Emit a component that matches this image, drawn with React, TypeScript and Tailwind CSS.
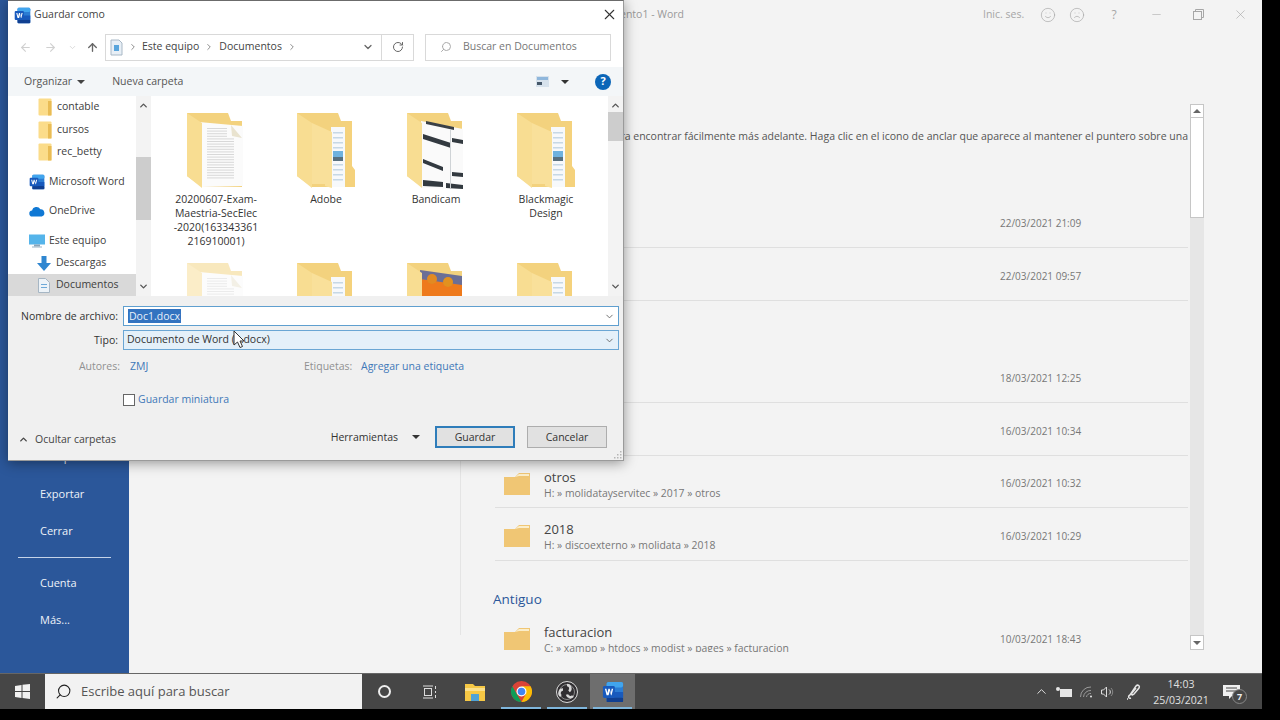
import {
  ArrowLeft,
  ArrowRight,
  ArrowUp,
  ChevronDown,
  ChevronRight,
  ChevronUp,
  Frown,
  Minus,
  RotateCw,
  Search,
  Smile,
  X,
} from "lucide-react";

const font = { fontFamily: '"Open Sans", "Noto Sans", sans-serif' };

const WordIcon = ({ size = 16 }: { size?: number }) => (
  <svg width={size} height={size} viewBox="0 0 24 24" className="shrink-0">
    <rect x="5" y="1" width="18" height="22" rx="2" fill="#2b7cd3" />
    <rect x="5" y="1" width="18" height="6" rx="2" fill="#41a5ee" />
    <rect x="5" y="12" width="18" height="6" fill="#185abd" />
    <rect x="5" y="18" width="18" height="5" rx="1" fill="#103f91" />
    <rect x="1" y="5.5" width="13" height="13" rx="1.5" fill="#185abd" />
    <path d="M3.2 8.5h1.6l1 4.6 1.2-4.6h1.4l1.2 4.6 1-4.6h1.6l-1.8 7H9.8L8.5 11l-1.3 4.5H5z" fill="#fff" />
  </svg>
);

const SmallFolder = () => (
  <svg width="14" height="18" viewBox="0 0 14 18" className="shrink-0">
    <rect x="0.5" y="0.5" width="13" height="17" rx="1" fill="#fbdc8a" />
    <rect x="10" y="3" width="3.5" height="14.5" fill="#e9bc55" />
  </svg>
);

const BigFolder = ({ kind, faded }: { kind: "doc" | "strip" | "band" | "photo"; faded?: boolean }) => (
  <svg width="60" height="78" viewBox="0 0 60 78" className={faded ? "opacity-50" : ""}>
    <path d="M1 1h41l3 8h11v66H16L1 64z" fill="#f3d27e" />
    {kind === "strip" && (
      <>
        <path d="M50 10h6v44l3 4v17H50z" fill="#f5d27c" />
        <rect x="35" y="15" width="14" height="60" fill="#f7f9fb" />
        {[20, 25, 30, 35, 52, 57, 62, 67].map((y) => (
          <rect key={y} x="37" y={y} width="10" height="1.5" fill="#c6d8e6" />
        ))}
        <rect x="37" y="39" width="10" height="6" fill="#6fb2de" />
        <rect x="37" y="45" width="10" height="4" fill="#58707f" />
        <path d="M16 11l20 9v56l-7 -2v-2H16z" fill="#f9e09a" />
      </>
    )}
    {kind === "doc" && (
      <>
        <path d="M13 10l44 4v60l-41 1z" fill="#fbfbfb" />
        <path d="M45 13l11 13l-10 -2z" fill="#e9e3cf" />
        {Array.from({ length: 20 }).map((_, i) => (
          <rect key={i} x="21" y={16 + i * 2.6} width={i < 4 ? 20 : 27} height="1" fill="#d8d8d8" />
        ))}
      </>
    )}
    {kind === "band" && (
      <>
        <path d="M15 9l42 8v60l-41-1z" fill="#fafafa" />
        <path d="M20 9l28 6v3l-28-6z" fill="#3a4046" />
        <path d="M17 22l28 9v5l-28-9zM46 26l11 2v4l-11-2zM17 47l20 8v4l-20-8zM46 60l11 1v4l-11-1zM17 68l20 2v5l-20-1zM40 71l17 2v4l-17-1z" fill="#333a40" />
        <rect x="44" y="18" width="1" height="58" fill="#cfd3d6" />
      </>
    )}
    {kind === "photo" && (
      <>
        <path d="M14 8l42 6v40l-40 2z" fill="#6b6f96" />
        <path d="M14 17l42 6v36H16z" fill="#ee7a1c" />
        <circle cx="26" cy="17" r="5" fill="#e28a22" />
        <circle cx="42" cy="20" r="5" fill="#e2911f" />
      </>
    )}
    <path d="M1 1l15 10v65L1 64z" fill="#f8dd92" />
  </svg>
);

const files = [
  { kind: "doc", label: ["20200607-Exam-", "Maestria-SecElec", "-2020(163343361", "216910001)"] },
  { kind: "strip", label: ["Adobe"] },
  { kind: "band", label: ["Bandicam"] },
  { kind: "strip", label: ["Blackmagic", "Design"] },
  { kind: "doc", label: [], faded: true },
  { kind: "strip", label: [] },
  { kind: "photo", label: [] },
  { kind: "strip", label: [] },
] as const;

const NavRow = ({ icon, label, selected, indent, mt }: { icon: React.ReactNode; label: string; selected?: boolean; indent: string; mt?: string }) => (
  <div className={`flex items-center h-[22px] ${indent} ${mt ?? ""} ${selected ? "bg-[#d9d9d9]" : ""}`}>
    {icon}
    <span className="text-[10.5px] text-[#404040] whitespace-nowrap">{label}</span>
  </div>
);

const ScrollBar = ({ thumb }: { thumb: string }) => (
  <div className="w-[15px] shrink-0 bg-[#f3f3f3] relative flex flex-col justify-between items-center py-[4px]">
    <ChevronUp size={11} strokeWidth={3} className="text-[#555]" />
    <div className={`absolute left-0 w-full bg-[#cdcdcd] ${thumb}`} />
    <ChevronDown size={11} strokeWidth={3} className="text-[#555]" />
  </div>
);

const SaveDialog = () => (
  <div className="absolute left-[8px] top-0 w-[616px] h-[461px] bg-white border-t border-t-[#6b6b6b] border-r border-b border-[#9a9a9a] shadow-[0_2px_12px_rgba(0,0,0,0.4)] flex flex-col">
    <div className="h-[28px] flex items-center pl-[6px] pr-[5px] shrink-0">
      <WordIcon size={17} />
      <span className="ml-[3px] text-[10.5px] text-[#444]">Guardar como</span>
      <X size={17} strokeWidth={1.5} className="ml-auto -mt-[2px] text-[#333]" />
    </div>

    <div className="h-[38px] flex items-center shrink-0 pb-[2px]">
      <ArrowLeft size={13} className="ml-[11px] text-[#d0d0d0]" />
      <ArrowRight size={13} className="ml-[12px] text-[#d0d0d0]" />
      <ChevronDown size={9} className="ml-[11px] text-[#d0d0d0]" />
      <ArrowUp size={13} strokeWidth={2.5} className="ml-[9px] text-[#666]" />
      <div className="ml-[6px] w-[309px] h-[27px] border border-[#d9d9d9] flex items-center">
        <svg width="13" height="17" viewBox="0 0 13 17" className="ml-[4px]">
          <path d="M1 1h8l3 3v12H1z" fill="#e8eff6" stroke="#a9b8c6" />
          <rect x="4" y="6" width="5" height="6" fill="#5aa5dc" />
        </svg>
        <ChevronRight size={10} className="ml-[5px] text-[#777]" />
        <span className="ml-[4px] text-[10.5px] text-[#444]">Este equipo</span>
        <ChevronRight size={10} className="ml-[5px] text-[#777]" />
        <span className="ml-[5px] text-[10.5px] text-[#444]">Documentos</span>
        <ChevronRight size={10} className="ml-[5px] text-[#777]" />
        <div className="ml-auto w-[28px] h-full flex items-center justify-center border-r border-[#d9d9d9]">
          <ChevronDown size={12} strokeWidth={2.5} className="text-[#666]" />
        </div>
        <div className="w-[31px] flex items-center justify-center">
          <RotateCw size={12} strokeWidth={2} className="text-[#666]" />
        </div>
      </div>
      <div className="ml-[11px] w-[186px] h-[27px] border border-[#d9d9d9] flex items-center pl-[14px]">
        <Search size={12} className="-scale-x-100 text-[#aaa]" />
        <span className="ml-[11px] text-[10.5px] text-[#777]">Buscar en Documentos</span>
      </div>
    </div>

    <div className="h-[29px] bg-[#f3f6f8] flex items-center shrink-0">
      <span className="ml-[16px] text-[10.5px] text-[#555]">Organizar</span>
      <span className="ml-[5px] w-0 h-0 border-x-[4px] border-x-transparent border-t-[4px] border-t-[#444]" />
      <span className="ml-[27px] text-[10.5px] text-[#555]">Nueva carpeta</span>
      <svg width="13" height="11" viewBox="0 0 13 11" className="ml-auto">
        <rect width="13" height="11" fill="#d7e2ec" />
        <rect x="1" y="1" width="11" height="3" fill="#8fb7dc" />
        <rect x="1" y="6" width="5" height="3" fill="#46586a" />
      </svg>
      <span className="ml-[12px] w-0 h-0 border-x-[4px] border-x-transparent border-t-[4px] border-t-[#333]" />
      <span className="ml-[26px] mr-[12px] w-[16px] h-[16px] rounded-full bg-[#0c66b8] text-white text-[11px] font-bold flex items-center justify-center">?</span>
    </div>

    <div className="h-[200px] flex shrink-0">
      <div className="w-[128px] shrink-0 overflow-hidden flex flex-col">
        <NavRow indent="pl-[30px] gap-[5px]" icon={<SmallFolder />} label="contable" />
        <NavRow indent="pl-[30px] gap-[5px] mt-px" icon={<SmallFolder />} label="cursos" />
        <NavRow indent="pl-[30px] gap-[5px]" icon={<SmallFolder />} label="rec_betty" />
        <NavRow indent="pl-[21px] gap-[4px]" mt="mt-[8px]" icon={<WordIcon size={16} />} label="Microsoft Word" />
        <NavRow
          indent="pl-[21px] gap-[4px]"
          mt="mt-[7px]"
          icon={
            <svg width="16" height="11" viewBox="0 0 16 11">
              <path d="M3.5 10.5a3 3 0 0 1-.4-6 4.4 4.4 0 0 1 8.2-1.2A3.7 3.7 0 0 1 12.800 10.500z" fill="#0f78d4" />
            </svg>
          }
          label="OneDrive"
        />
        <NavRow
          indent="pl-[21px] gap-[4px]"
          mt="mt-[8px]"
          icon={
            <svg width="16" height="14" viewBox="0 0 16 14">
              <rect y="0.5" width="16" height="10" fill="#55b4ea" />
              <rect x="5" y="10.500" width="6" height="2" fill="#8aa4b8" />
              <rect x="3" y="12.500" width="10" height="1" fill="#9ab3c6" />
            </svg>
          }
          label="Este equipo"
        />
        <NavRow
          indent="pl-[29px] gap-[5px]"
          icon={
            <svg width="14" height="15" viewBox="0 0 14 15">
              <path d="M4.500 0h5v7H14l-7 8-7-8h4.500z" fill="#2f86d0" />
            </svg>
          }
          label="Descargas"
        />
        <NavRow
          indent="pl-[30px] gap-[6px]"
          selected
          icon={
            <svg width="12" height="15" viewBox="0 0 12 15">
              <path d="M.5.500h7l4 4v10H.5z" fill="#edf3f8" stroke="#a6b6c4" />
              <rect x="3" y="6" width="6" height="1" fill="#6ea9d8" />
              <rect x="3" y="9" width="6" height="1" fill="#6ea9d8" />
            </svg>
          }
          label="Documentos"
        />
      </div>
      <ScrollBar thumb="top-[61px] h-[63px]" />
      <div className="flex-1 overflow-hidden pl-[10px] pt-[16px]">
        <div className="grid grid-cols-[110px_110px_110px_110px] auto-rows-[150px]">
          {files.map((f, i) => (
            <div key={i} className="flex flex-col items-center">
              <div className="h-[80px]">
                <BigFolder kind={f.kind} faded={"faded" in f} />
              </div>
              <div className="text-center text-[10.5px] leading-[14px] text-[#333] whitespace-nowrap">
                {f.label.map((line) => (
                  <p key={line}>{line}</p>
                ))}
              </div>
            </div>
          ))}
        </div>
      </div>
      <ScrollBar thumb="top-[16px] h-[29px]" />
    </div>

    <div className="flex-1 bg-[#f0f0f0] flex flex-col pt-[10px] relative">
      <div className="flex items-center">
        <span className="w-[110px] pt-px text-right text-[10.5px] text-[#333]">Nombre de archivo:</span>
        <div className="ml-[5px] w-[496px] h-[20px] bg-white border border-[#5f9fcf] flex items-center pl-[4px] pr-[3px]">
          <span className="bg-[#3373c0] text-[#e8f0fa] text-[10.5px] leading-[14px] px-[1px]">Doc1.docx</span>
          <ChevronDown size={11} className="ml-auto text-[#666]" />
        </div>
      </div>
      <div className="flex items-center mt-[4px]">
        <span className="w-[110px] pt-px text-right text-[10.5px] text-[#333]">Tipo:</span>
        <div className="ml-[5px] w-[496px] h-[20px] bg-[#e4f0f9] border border-[#6aa6d4] flex items-center pl-[3px] pr-[3px]">
          <span className="text-[10.5px] text-[#333]">Documento de Word (*.docx)</span>
          <ChevronDown size={11} className="ml-auto text-[#666]" />
        </div>
      </div>
      <div className="flex items-center h-[16px] mt-[9px] text-[10.5px]">
        <span className="w-[112px] text-right text-[#909090]">Autores:</span>
        <span className="ml-[10px] w-[174px] text-[#3f78b8]">ZMJ</span>
        <span className="w-[47px] text-[#909090]">Etiquetas:</span>
        <span className="ml-[10px] text-[#3f78b8]">Agregar una etiqueta</span>
      </div>
      <div className="flex items-center h-[14px] mt-[18px] pl-[115px]">
        <span className="w-[12px] h-[12px] bg-white border border-[#666]" />
        <span className="ml-[3px] text-[10.5px] text-[#3f78b8]">Guardar miniatura</span>
      </div>
      <div className="flex items-center h-[22px] mt-[19px]">
        <ChevronUp size={11} strokeWidth={3} className="ml-[10px] mt-[5px] text-[#444]" />
        <span className="ml-[6px] mt-[6px] text-[10.5px] text-[#444]">Ocultar carpetas</span>
        <span className="ml-auto pt-[2px] text-[10.5px] text-[#333]">Herramientas</span>
        <span className="ml-[14px] w-0 h-0 border-x-[4px] border-x-transparent border-t-[4px] border-t-[#333]" />
        <button className="ml-[15px] w-[80px] h-[22px] bg-[#e1e1e1] border-2 border-[#2f7dba] pt-px text-[10.5px] text-[#333]">Guardar</button>
        <button className="ml-[12px] mr-[16px] w-[80px] h-[22px] bg-[#e1e1e1] border border-[#adadad] pt-px text-[10.5px] text-[#333]">Cancelar</button>
      </div>
      <svg width="10" height="10" viewBox="0 0 10 10" className="absolute right-[1px] bottom-[1px]">
        {[[8, 2], [8, 5], [5, 5], [8, 8], [5, 8], [2, 8]].map(([x, y]) => (
          <rect key={`${x}-${y}`} x={x} y={y} width="1.500" height="1.500" fill="#b5b5b5" />
        ))}
      </svg>
    </div>
  </div>
);

const rows = [
  { date: "22/03/2021 21:09" },
  { date: "22/03/2021 09:57" },
  { date: "18/03/2021 12:25", gap: true },
  { date: "16/03/2021 10:34" },
  { date: "16/03/2021 10:32", name: "otros", path: "H: » molidatayservitec » 2017 » otros" },
  { date: "16/03/2021 10:29", name: "2018", path: "H: » discoexterno » molidata » 2018" },
];

const FolderFlat = () => (
  <svg width="26" height="22" viewBox="0 0 26 22" className="shrink-0">
    <path d="M0 4l0 18h26V0H15l-4 4z" fill="#f0c674" />
    <path d="M11 4l4-3h10v2H15z" fill="#fbeecb" />
  </svg>
);

const Row = ({ date, name, path, last }: { date: string; name?: string; path?: string; last?: boolean }) => (
  <div className={`h-[52.5px] ml-[2px] flex items-center pl-[9px] pt-[5px] ${last ? "" : "border-b border-[#dfdfdf]"}`}>
    <FolderFlat />
    <div className="ml-[14px] w-[456px] flex flex-col">
      <span className="text-[13px] leading-[18px] text-[#444]">{name ?? " "}</span>
      <span className="text-[10.4px] leading-[14px] text-[#777] whitespace-nowrap">{path ?? " "}</span>
    </div>
    <span className="text-[10px] text-[#777]">{date}</span>
  </div>
);

const WordBackstage = () => (
  <div className="h-[673px] flex shrink-0">
    <div className="w-[129px] shrink-0 bg-[#2b579a] flex flex-col justify-end pb-[34px] text-[11px] text-[#edf2f9]">
      {["Compartir", "Exportar", "Cerrar"].map((t) => (
        <div key={t} className="h-[37px] pl-[40px] flex items-center">{t}</div>
      ))}
      <div className="h-px mx-[18px] my-[7px] bg-[#c5d3e8]" />
      {["Cuenta", "Más..."].map((t) => (
        <div key={t} className="h-[37px] pl-[40px] flex items-center">{t}</div>
      ))}
    </div>
    <div className="flex-1 bg-[#f3f3f3] flex flex-col min-w-0">
      <div className="h-[29px] flex items-center shrink-0 text-[#a6a6a6]">
        <span className="w-[555px] text-right text-[10.5px] text-[#999]">Documento1 - Word</span>
        <span className="ml-[299px] w-[41px] text-[10.5px] whitespace-nowrap">Inic. ses.</span>
        <Smile size={16} strokeWidth={1} className="ml-[16px]" />
        <Frown size={16} strokeWidth={1} className="ml-[13px]" />
        <span className="ml-[23px] w-[12px] text-center text-[12px]">?</span>
        <Minus size={13} strokeWidth={1} className="ml-[30px]" />
        <svg width="11" height="11" viewBox="0 0 11 11" className="ml-[30px]" fill="none" stroke="currentColor">
          <rect x=".5" y="2.500" width="8" height="8" />
          <path d="M2.500 2.500v-2h8v8h-2" />
        </svg>
        <X size={15} strokeWidth={1} className="ml-[29px]" />
      </div>
      <div className="h-[644px] flex">
        <div className="w-[332px] shrink-0 border-r border-[#e4e4e4] h-[606px]" />
        <div className="ml-[32px] w-[695px] h-[548px] mt-[75px] overflow-hidden">
          <div className="mt-[24px] h-[16px] flex justify-end">
            <p className="shrink-0 leading-[16px] text-[10.5px] text-[#555] whitespace-nowrap">
              Ancle los archivos que desee para encontrar fácilmente más adelante. Haga clic en el icono de anclar que aparece al mantener el puntero sobre una
            </p>
          </div>
          <div className="h-[51.500px]" />
          {rows.map((r) => (
            <div key={r.date}>
              {r.gap && <div className="h-[50px]" />}
              <Row date={r.date} name={r.name} path={r.path} />
            </div>
          ))}
          <p className="mt-[26px] h-[24px] text-[13.500px] leading-[24px] text-[#2b579a]">Antiguo</p>
          <Row date="10/03/2021 18:43" name="facturacion" path="C: » xampp » htdocs » modist » pages » facturacion" last />
        </div>
        <div className="ml-[2px] w-[14px] h-[546px] mt-[75px] bg-[#e6e6e6] flex flex-col">
          <div className="h-[14px] bg-white border border-[#c6c6c6] flex items-center justify-center">
            <span className="w-0 h-0 border-x-[4px] border-x-transparent border-b-[4px] border-b-[#666]" />
          </div>
          <div className="h-[100px] bg-white border border-[#c6c6c6] border-t-0" />
          <div className="mt-auto h-[15px] bg-white border border-[#c6c6c6] flex items-center justify-center">
            <span className="w-0 h-0 border-x-[4px] border-x-transparent border-t-[4px] border-t-[#666]" />
          </div>
        </div>
      </div>
    </div>
  </div>
);

const TaskCell = ({ width, active, underline, children }: { width: string; active?: boolean; underline?: boolean; children: React.ReactNode }) => (
  <div className={`relative h-full flex items-center justify-center ${width} ${active ? "bg-[#6e6e6e]" : ""}`}>
    {children}
    {underline && <div className="absolute bottom-0 left-[3px] right-[3px] h-[2px] bg-[#7fb6dc]" />}
  </div>
);

const Taskbar = () => (
  <div className="h-[36px] bg-[#464646] flex items-center shrink-0 border-t border-[#666]">
    <div className="w-[45px] h-full flex items-center justify-center">
      <svg width="15" height="15" viewBox="0 0 15 15" fill="#f2f2f2">
        <path d="M0 2l6.500-1v6H0zM7.500.800L15 0v7H7.500zM0 8h6.500v6L0 13zM7.500 8H15v7l-7.500-1z" />
      </svg>
    </div>
    <div className="w-[317px] h-full bg-[#f2f2f2] flex items-center pl-[10px]">
      <Search size={17} strokeWidth={1.5} className="-scale-x-100 text-[#222]" />
      <span className="ml-[9px] text-[13px] text-[#555]">Escribe aquí para buscar</span>
    </div>
    <TaskCell width="w-[45px]">
      <span className="w-[13px] h-[13px] rounded-full border-2 border-[#eee]" />
    </TaskCell>
    <TaskCell width="w-[45px]">
      <svg width="15" height="14" viewBox="0 0 15 14" fill="none" stroke="#ddd">
        <rect x="2.500" y="3.500" width="7" height="7" />
        <path d="M1 1h10M1 13h10M13.500 1v3M13.500 6v2M13.500 10v3" />
      </svg>
    </TaskCell>
    <TaskCell width="w-[46px]">
      <svg width="20" height="18" viewBox="0 0 20 18">
        <path d="M0 1h8l2 2h10v15H0z" fill="#f6c845" />
        <rect y="5" width="20" height="3" fill="#fbe08a" />
        <rect x="6" y="11" width="8" height="7" fill="#4fa3d8" />
      </svg>
    </TaskCell>
    <TaskCell width="w-[46px]" underline>
      <svg width="21" height="21" viewBox="0 0 21 21">
        <circle cx="10.500" cy="10.500" r="10.500" fill="#db4437" />
        <path d="M10.500 21A10.500 10.500 0 0 1 1.400 5.250l5 9z" fill="#0f9d58" />
        <path d="M10.500 21a10.500 10.500 0 0 0 9.100-15.750H10.500l4.500 7.500z" fill="#fbbc05" />
        <circle cx="10.500" cy="10.500" r="5" fill="#fff" />
        <circle cx="10.500" cy="10.500" r="3.800" fill="#4285f4" />
      </svg>
    </TaskCell>
    <TaskCell width="w-[46px]" underline>
      <svg width="22" height="22" viewBox="0 0 22 22" fill="none">
        <circle cx="11" cy="11" r="10.500" fill="#302e31" stroke="#ddd" />
        <circle cx="11" cy="11" r="7.500" stroke="#8a8a8a" strokeWidth="1" />
        <path d="M11 4a3.500 3.500 0 0 1 2 6.300M5 15a3.500 3.500 0 0 1 2-6.400M17 15a3.500 3.500 0 0 1-6-1.500" stroke="#d8d8d8" strokeWidth="2.500" />
      </svg>
    </TaskCell>
    <TaskCell width="w-[45px]" active underline>
      <WordIcon size={22} />
    </TaskCell>
    <div className="ml-auto h-full flex items-center pr-[16px] text-[#e6e6e6]">
      <TaskCell width="w-[22px]">
        <ChevronUp size={15} strokeWidth={1.5} />
      </TaskCell>
      <TaskCell width="w-[23px]">
        <svg width="16" height="10" viewBox="0 0 16 10" fill="#e6e6e6">
          <rect x="4" y="2" width="12" height="8" />
          <circle cx="2" cy="2" r="2" />
        </svg>
      </TaskCell>
      <TaskCell width="w-[23px]">
        <svg width="13" height="12" viewBox="0 0 13 12" fill="none" stroke="#9a9a9a">
          <path d="M0.500 11A10 10 0 0 1 11 1M3.500 11A7 7 0 0 1 11 4.500M6.500 11A4 4 0 0 1 11 7.500" />
          <circle cx="11" cy="10.500" r="1" fill="#e6e6e6" stroke="none" />
        </svg>
      </TaskCell>
      <TaskCell width="w-[18px]">
        <svg width="13" height="12" viewBox="0 0 13 12" fill="none" stroke="#dcdcdc">
          <path d="M.5 4h2l3-3v10l-3-3h-2z" />
          <path d="M8 3.500a3 3 0 0 1 0 5" />
          <path d="M10 2a5.500 5.500 0 0 1 0 8" stroke="#888" />
        </svg>
      </TaskCell>
      <TaskCell width="w-[24px] ml-[6px]">
        <svg width="16" height="16" viewBox="0 0 16 16" fill="none" stroke="#e6e6e6" strokeWidth="1.500">
          <path d="M5 14c-3 1-3-2-1-3l6-9c2-2 4 0 3 2l-5 6c-2 2-3 0-2-1l4-5M1 15h1" />
        </svg>
      </TaskCell>
      <div className="ml-[4px] w-[62px] flex flex-col items-center text-[10.500px] leading-[16px] text-[#e0e0e0]">
        <span>14:03</span>
        <span>25/03/2021</span>
      </div>
      <div className="relative ml-[4px] w-[30px] h-full flex items-center justify-center">
        <svg width="17" height="16" viewBox="0 0 17 16" fill="#f0f0f0">
          <path d="M0 1h17v11H9l-3 3v-3H0z" />
          <path d="M3 4h11M3 7h11" stroke="#464646" />
        </svg>
        <span className="absolute -right-[1px] bottom-[5px] w-[15px] h-[15px] rounded-full bg-[#464646] border border-[#888] flex items-center justify-center text-[9px] font-bold text-[#eee]">7</span>
      </div>
    </div>
  </div>
);

const App = () => {
  return (
    <div className="relative w-[1280px] h-[720px] bg-black overflow-hidden" style={font}>
      <div className="w-[1262px] h-[709px] flex flex-col">
        <WordBackstage />
        <Taskbar />
      </div>
      <SaveDialog />
      <svg width="13" height="19" viewBox="0 0 13 19" className="absolute left-[233px] top-[330px]">
        <path d="M1 1v14l3.500-3 2.500 5.500 2.500-1-2.500-5.500H11z" fill="#fff" stroke="#333" strokeWidth="1" />
      </svg>
    </div>
  );
};

export default App;
